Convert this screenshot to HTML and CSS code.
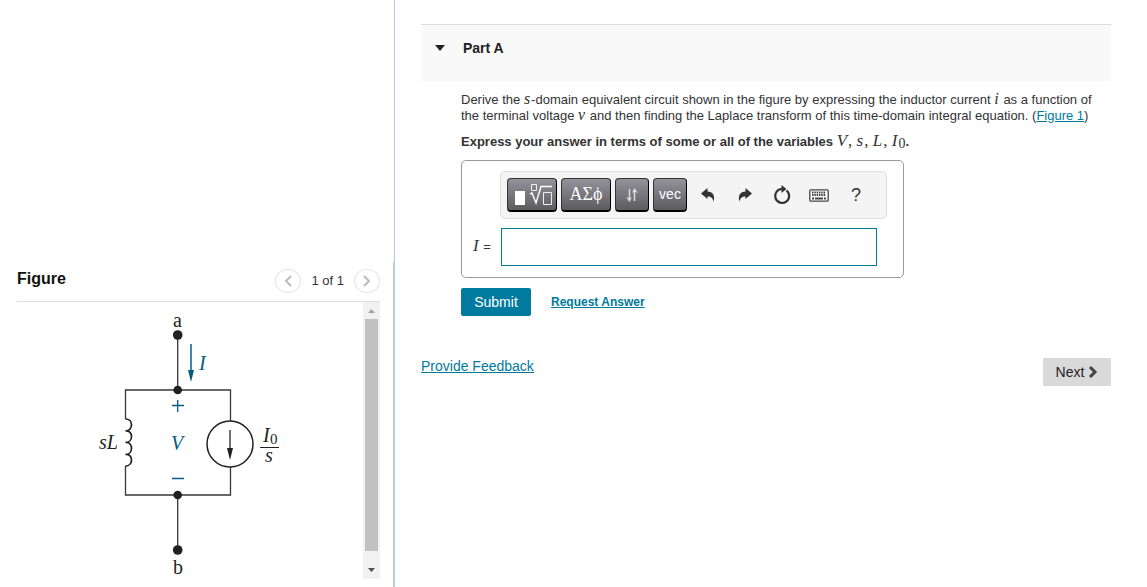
FILE: index.html
```html
<!DOCTYPE html>
<html lang="en">
<head>
    <meta charset="UTF-8">
    <title>Part A</title>
    <link rel="stylesheet" href="styles.css">
</head>
<body>
    <aside class="left">
        <section class="figure">
            <div class="figure-head">
                <h2>Figure</h2>
                <div class="pager">
                    <button type="button" class="round" aria-label="Previous figure">
                        <svg width="10" height="14" viewBox="0 0 10 14"><path d="M8 2 3 7l5 5" fill="none" stroke="#bbb" stroke-width="2"/></svg>
                    </button>
                    <span>1 of 1</span>
                    <button type="button" class="round" aria-label="Next figure">
                        <svg width="10" height="14" viewBox="0 0 10 14"><path d="M2 2l5 5-5 5" fill="none" stroke="#bbb" stroke-width="2"/></svg>
                    </button>
                </div>
            </div>
            <div class="figure-body">
                <svg class="circuit" width="300" height="277" viewBox="0 0 300 277">
                    <!-- wires -->
                    <g fill="none" stroke="#3a3638" stroke-width="1.3">
                        <path d="M160.700 33V88M160.700 193V248"/>
                        <path d="M108.500 117V88H213.500V119M213.500 165V193H108.500V164"/>
                    </g>
                    <!-- inductor -->
                    <path d="M108.500 117c8 0 8 11.500 0 12c8-1 8 11.500 0 11.500c8-1 8 12 0 12c8-1 8 11.500 0 11.500" fill="none" stroke="#231f20" stroke-width="1.700"/>
                    <!-- current source -->
                    <circle cx="213" cy="142" r="23" fill="none" stroke="#231f20" stroke-width="1.500"/>
                    <path d="M213 128v20" stroke="#231f20" stroke-width="1.300"/>
                    <path d="M210 146h6l-3 12z" fill="#231f20"/>
                    <!-- nodes -->
                    <g fill="#231f20">
                        <circle cx="160.700" cy="33" r="4.800"/>
                        <circle cx="160.700" cy="88" r="4.300"/>
                        <circle cx="160.700" cy="193" r="4.300"/>
                        <circle cx="160.700" cy="248" r="4.800"/>
                    </g>
                    <!-- terminal current and voltage -->
                    <path d="M174 42v28" stroke="#005c84" stroke-width="1.500"/>
                    <path d="M171 68h6l-3 12z" fill="#005c84"/>
                    <path d="M155 103.500h12M160.700 98v12M155 176.500h12" stroke="#005c84" stroke-width="1.300"/>
                    <g class="label">
                        <text x="156" y="25">a</text>
                        <text x="156" y="272">b</text>
                        <g class="it">
                            <text x="82" y="147">sL</text>
                            <text x="246" y="140">I</text>
                            <text x="248" y="160">s</text>
                            <text class="teal" x="182" y="68">I</text>
                            <text class="teal" x="154" y="148">V</text>
                        </g>
                        <text class="sub" x="253" y="142">0</text>
                    </g>
                    <path d="M243 145.500h19" stroke="#231f20"/>
                </svg>
                <div class="scroll">
                    <svg width="17" height="17" viewBox="0 0 17 17"><path d="M5 11h7L8.500 7z" fill="#a3a3a3"/></svg>
                    <div class="thumb"></div>
                    <svg width="17" height="17" viewBox="0 0 17 17"><path d="M5 6h7L8.500 10z" fill="#505050"/></svg>
                </div>
            </div>
        </section>
    </aside>

    <main class="right">
        <div class="part-head">
            <svg width="12" height="8" viewBox="0 0 12 8"><path d="M1 1h10L6 7z" fill="#222"/></svg>
            <h1>Part A</h1>
        </div>
        <div class="part-body">
            <p>Derive the <var>s</var>-domain equivalent circuit shown in the figure by expressing the inductor current <var>i</var> as a function of the terminal voltage <var>v</var> and then finding the Laplace transform of this time-domain integral equation. (<a href="#">Figure 1</a>)</p>
            <p class="express"><b>Express your answer in terms of some or all of the variables</b> <span class="math"><var>V</var>, <var>s</var>, <var>L</var>, <var>I</var><sub>0</sub></span><b>.</b></p>
            <div class="answer">
                <div class="toolbar">
                    <button type="button" class="dark wide" aria-label="Templates">
                        <svg width="40" height="24" viewBox="0 0 40 24">
                            <path d="M3 8h10v14H3z" fill="#fff"/>
                            <path d="M19.500 1.500h5v6h-5zM31.500 9.500h8v12h-8z" fill="none" stroke="#eee"/>
                            <path d="M18 11l2-1 4 10 5-16.500h12" fill="none" stroke="#fff" stroke-width="1.400"/>
                        </svg>
                    </button>
                    <button type="button" class="dark wide greek">ΑΣϕ</button>
                    <button type="button" class="dark" aria-label="Arrows">
                        <svg width="16" height="18" viewBox="0 0 16 18"><path d="M5.500 3v11M10.500 15V4" fill="none" stroke="#ddd" stroke-width="1.500"/><path d="M2 11l3.500 1.500L8 11l-2.500 5zM8 7l2.500-5L14 7l-3.500-1.500z" fill="#ddd"/></svg>
                    </button>
                    <button type="button" class="dark vec">vec</button>
                    <div class="tools">
                        <button type="button" class="tool" aria-label="Undo">
                            <svg width="16" height="16" viewBox="0 0 16 16"><path d="M1 6.500 7.500 1v3.500c5 .2 8 3.500 6 10.500-.5-4-2.500-5.500-6-5.500V12z" fill="#333"/></svg>
                        </button>
                        <button type="button" class="tool" aria-label="Redo">
                            <svg width="16" height="16" viewBox="0 0 16 16"><path d="M15 6.500 8.500 1v3.500c-5 .2-8 3.500-6 10.500.5-4 2.500-5.500 6-5.500V12z" fill="#333"/></svg>
                        </button>
                        <button type="button" class="tool" aria-label="Reset">
                            <svg width="18" height="20" viewBox="0 0 18 20"><path d="M13.500 5.500a7 7 0 1 1-5-1.500h2" fill="none" stroke="#333" stroke-width="2.200"/><path d="M8.500 0l5 4-5 4z" fill="#333"/></svg>
                        </button>
                        <button type="button" class="tool" aria-label="Keyboard">
                            <svg width="20" height="14" viewBox="0 0 20 14"><rect x=".8" y="1.800" width="18.400" height="11.400" rx="1" fill="#fff" stroke="#444" stroke-width="1.300"/><path d="M3 4.500h14M3 7h14" stroke="#444" stroke-width="1.800" stroke-dasharray="1.500 .8"/><path d="M3 10.500h2M6 10.500h8M15 10.500h2" stroke="#444" stroke-width="1.800"/></svg>
                        </button>
                        <button type="button" class="tool help">?</button>
                    </div>
                </div>
                <div class="entry">
                    <label for="answer"><var>I</var> =</label>
                    <input type="text" id="answer">
                </div>
            </div>
            <div class="actions">
                <button type="button" class="submit">Submit</button>
                <a href="#">Request Answer</a>
            </div>
        </div>
        <div class="bottom">
            <a href="#">Provide Feedback</a>
            <button type="button" class="next">Next
                <svg width="10" height="14" viewBox="0 0 10 14"><path d="M2 2l5 5-5 5" fill="none" stroke="#444" stroke-width="3"/></svg>
            </button>
        </div>
    </main>
</body>
</html>
```
FILE: styles.css
```css
* {
    box-sizing: border-box;
    margin: 0;
    padding: 0;
}

body {
    display: flex;
    min-height: 100vh;
    font-family: "Liberation Sans", Arial, sans-serif;
    font-size: 13px;
    line-height: 16px;
    color: #333;
    background: #fff;
}

button {
    font-family: inherit;
    border: 0;
    cursor: pointer;
}

svg {
    display: block;
}

a {
    color: #007a9b;
}

var {
    margin-right: 1px;
    font-family: "Liberation Serif", "Times New Roman", serif;
    font-size: 16px;
    font-style: italic;
    line-height: 0;
}

/* left pane */
.left {
    flex: 0 0 395px;
    display: flex;
    flex-direction: column;
    justify-content: flex-end;
    border-right: 1px solid #b9cde0;
}

.figure {
    padding: 0 13px 8px 17px;
    border-right: 1px solid #b9cde0;
}

.figure-head {
    display: flex;
    justify-content: space-between;
    height: 40px;
    border-bottom: 1px solid #ddd;
}

.figure-head h2 {
    font-size: 16px;
    line-height: 34px;
    color: #111;
}

.pager {
    display: flex;
    align-items: center;
    gap: 10px;
    padding-bottom: 1px;
}

.round {
    display: flex;
    align-items: center;
    justify-content: center;
    width: 26px;
    height: 24px;
    border: 1px solid #e4e4e4;
    border-radius: 50%;
    background: #fff;
}

.figure-body {
    display: flex;
    justify-content: space-between;
}

.label {
    font-family: "Liberation Serif", "Times New Roman", serif;
    font-size: 20px;
    fill: #231f20;
}

.it {
    font-style: italic;
}

.sub {
    font-size: 15px;
}

.teal {
    fill: #005c84;
}

.scroll {
    display: flex;
    flex-direction: column;
    width: 17px;
    background: #f1f1f1;
}

.thumb {
    flex: 0 1 232px;
    margin: 0 2px;
    background: #c1c1c1;
}

.scroll svg:last-child {
    margin-top: auto;
}

/* right pane */
.right {
    flex: 1;
    padding: 24px 36px 24px 26px;
}

.part-head {
    display: flex;
    gap: 17px;
    height: 57px;
    padding: 15px 13px;
    border-top: 1px solid #ddd;
    background: #f9f9f9;
}

.part-head svg {
    margin-top: 4px;
}

.part-head h1 {
    font-size: 14px;
    line-height: 16px;
    color: #222;
}

.part-body {
    padding: 11px 16px 0 40px;
}

.express {
    margin-top: 10px;
}

.math {
    font-family: "Liberation Serif", "Times New Roman", serif;
    font-size: 17px;
    line-height: 0;
}

.math var {
    font-size: 17px;
}

.math sub {
    font-size: 14px;
    vertical-align: -2px;
}

.answer {
    width: 443px;
    max-width: 100%;
    margin-top: 10px;
    padding: 10px 16px 11px 11px;
    border: 1px solid #999;
    border-radius: 5px;
}

.toolbar {
    display: flex;
    align-items: center;
    gap: 4px;
    height: 48px;
    margin-left: 27px;
    padding: 0 6px;
    border: 1px solid #ddd;
    border-radius: 5px;
    background: #f4f4f4;
}

.dark {
    display: flex;
    align-items: center;
    justify-content: center;
    width: 34px;
    height: 34px;
    border: 1px solid #333;
    border-right-color: #000;
    border-bottom: 2px solid #000;
    border-radius: 4px;
    background: linear-gradient(#94929b, #5c5c5e);
    color: #fff;
}

.wide {
    width: 50px;
}

.greek {
    font-family: "Liberation Serif", "Times New Roman", serif;
    font-size: 18px;
}

.vec {
    padding-bottom: 2px;
    font-size: 14px;
}

.tools {
    display: flex;
    gap: 3px;
}

.tool {
    display: flex;
    align-items: center;
    justify-content: center;
    width: 34px;
    height: 34px;
    background: none;
    color: #333;
}

.help {
    font-size: 18px;
}

.entry {
    display: flex;
    align-items: center;
    margin: 9px 10px 0 0;
}

.entry label {
    width: 28px;
    white-space: nowrap;
}

.entry label var {
    font-size: 17px;
}

.entry input {
    flex: 1;
    height: 38px;
    padding: 0 8px;
    border: 1px solid #007a9b;
    font-size: 16px;
}

.actions {
    display: flex;
    align-items: center;
    gap: 20px;
    margin-top: 10px;
    font-size: 12px;
    font-weight: bold;
}

.submit {
    width: 70px;
    height: 28px;
    border-radius: 2px;
    background: #007a9f;
    color: #fff;
    font-size: 14px;
}

.bottom {
    display: flex;
    justify-content: space-between;
    margin-top: 42px;
    font-size: 14px;
}

.next {
    display: flex;
    align-items: center;
    justify-content: center;
    gap: 4px;
    width: 68px;
    height: 28px;
    border-radius: 1px;
    background: #d9d9d9;
    color: #222;
    font-size: 14px;
}
```
